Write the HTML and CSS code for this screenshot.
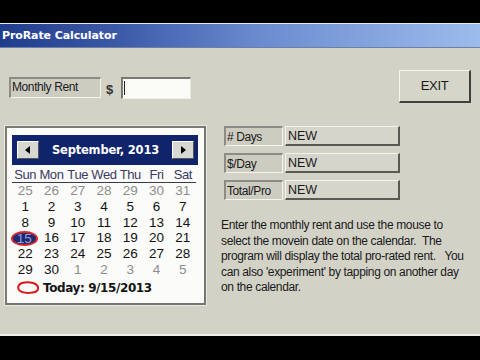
FILE: index.html
```html
<!DOCTYPE html>
<html>
<head>
<meta charset="utf-8">
<link rel="stylesheet" href="styles.css">
</head>
<body>
<div class="screen">
  <div class="black-top"></div>
  <div class="window">
    <div class="titlebar"><span class="title">ProRate Calculator</span></div>
    <div class="content">
      <div class="top-row">
        <div class="rent-group">
          <div class="label-box rent-label">Monthly Rent</div>
          <span class="dollar">$</span>
          <div class="input-box"><span class="caret"></span></div>
        </div>
        <div class="exit-btn">EXIT</div>
      </div>
      <div class="main-row">
        <div class="calendar">
          <div class="cal-head">
            <div class="nav-btn"><svg width="6" height="8" viewBox="0 0 6 8"><path d="M5 0 L0 4 L5 8 Z" fill="#000"/></svg></div>
            <div class="month">September, 2013</div>
            <div class="nav-btn"><svg width="6" height="8" viewBox="0 0 6 8"><path d="M1 0 L6 4 L1 8 Z" fill="#000"/></svg></div>
          </div>
          <div class="weekdays">
            <span>Sun</span><span>Mon</span><span>Tue</span><span>Wed</span><span>Thu</span><span>Fri</span><span>Sat</span>
          </div>
          <div class="days">
            <span class="dim">25</span><span class="dim">26</span><span class="dim">27</span><span class="dim">28</span><span class="dim">29</span><span class="dim">30</span><span class="dim">31</span>
            <span>1</span><span>2</span><span>3</span><span>4</span><span>5</span><span>6</span><span>7</span>
            <span>8</span><span>9</span><span>10</span><span>11</span><span>12</span><span>13</span><span>14</span>
            <span class="sel"><i>15</i></span><span>16</span><span>17</span><span>18</span><span>19</span><span>20</span><span>21</span>
            <span>22</span><span>23</span><span>24</span><span>25</span><span>26</span><span>27</span><span>28</span>
            <span>29</span><span>30</span><span class="dim">1</span><span class="dim">2</span><span class="dim">3</span><span class="dim">4</span><span class="dim">5</span>
          </div>
          <div class="today">
            <svg width="24" height="14" viewBox="0 0 24 14"><path d="M6 2 C13 0 23 2 22 8 C21 13 6 13 3 9 C1 6 3 3 6 2 Z" fill="none" stroke="#d81818" stroke-width="2"/></svg>
            <span>Today: 9/15/2013</span>
          </div>
        </div>
        <div class="right-col">
          <div class="field-row"><div class="label-box field-label">#&nbsp;Days</div><div class="value-box">NEW</div></div>
          <div class="field-row"><div class="label-box field-label">$/Day</div><div class="value-box">NEW</div></div>
          <div class="field-row"><div class="label-box field-label">Total/Pro</div><div class="value-box">NEW</div></div>
          <p class="help">Enter the monthly rent and use the mouse to select the movein date on the calendar.&nbsp; The program will display the total pro-rated rent.&nbsp;&nbsp; You can also 'experiment' by tapping on another day on the calendar.</p>
        </div>
      </div>
    </div>
  </div>
  <div class="black-bottom"></div>
</div>
</body>
</html>
```

FILE: styles.css
```css
* { box-sizing: border-box; }
html, body { margin: 0; padding: 0; background: #000; }
body {
  width: 480px;
  height: 360px;
  overflow: hidden;
  font-family: "Liberation Sans", Arial, sans-serif;
  color: #141414;
}
.screen { display: flex; flex-direction: column; height: 360px; }
.black-top { height: 23px; background: #000; }
.black-bottom { flex: 1; background: #000; }
.window {
  height: 313px;
  background: #d3d2c7;
  border-top: 1px solid #e8e8e2;
  border-bottom: 2px solid #efefe8;
  display: flex;
  flex-direction: column;
}
.titlebar {
  height: 24px;
  background: linear-gradient(90deg, #203c8c 0%, #3d5aa8 25%, #6d8cd0 55%, #9cbcec 100%);
  border-bottom: 1px solid #6c7fa8;
  display: flex;
  align-items: center;
  padding-left: 2px;
}
.title {
  color: #fff;
  font-family: "DejaVu Sans", sans-serif;
  font-weight: bold;
  font-size: 11px;
  letter-spacing: -0.1px;
}
.content { flex: 1; padding: 22px 9px 0 5px; }
.top-row { display: flex; justify-content: space-between; align-items: center; height: 32px; }
.rent-group { display: flex; align-items: center; padding-left: 4px; }
.label-box {
  background: #cdccc1;
  border-top: 2px solid #8c8b84;
  border-left: 2px solid #8c8b84;
  border-bottom: 1px solid #f4f4ee;
  border-right: 1px solid #f4f4ee;
  font-size: 12px;
  letter-spacing: -0.4px;
  line-height: 16px;
  padding-left: 1px;
  color: #1a1a1a;
}
.rent-label { width: 92px; height: 21px; margin-top: 2px; }
.dollar { font-size: 13px; font-weight: bold; margin: 6px 0 0 5px; width: 15px; color: #333; }
.input-box {
  width: 70px; height: 22px;
  background: #fbfbf8;
  border-top: 2px solid #7a7a74;
  border-left: 2px solid #7a7a74;
  border-bottom: 1px solid #f0f0ea;
  border-right: 1px solid #e8e8e2;
  margin-top: 4px;
  padding: 2px 0 0 1px;
}
.caret { display: block; width: 1px; height: 14px; background: #222; }
.exit-btn {
  width: 72px; height: 33px;
  border-top: 1px solid #f6f6f0;
  border-left: 1px solid #f6f6f0;
  border-right: 2px solid #404040;
  border-bottom: 2px solid #404040;
  background: #d6d5ca;
  display: flex; align-items: center; justify-content: center;
  font-size: 13px;
  letter-spacing: -0.3px;
  color: #1a1a1a;
}
.main-row { display: flex; margin-top: 24px; }
.calendar {
  width: 202px; height: 179px;
  background: #fbfbf9;
  border-top: 2px solid #7c7c76;
  border-left: 2px solid #7c7c76;
  border-right: 2px solid #76766f;
  border-bottom: 2px solid #76766f;
  box-shadow: 0 0 0 1px #e9e9e2;
  padding: 7px 6px 0 5px;
}
.cal-head {
  height: 30px;
  background: #10246c;
  display: flex; align-items: center; justify-content: space-between;
  padding: 0 4px 0 5px;
}
.nav-btn {
  width: 22px; height: 18px;
  background: #d8d8d2;
  border-top: 1px solid #fff; border-left: 1px solid #fff;
  border-right: 1px solid #555; border-bottom: 1px solid #555;
  display: flex; align-items: center; justify-content: center;
}
.month {
  color: #fff;
  font-family: "DejaVu Sans", sans-serif;
  font-weight: bold;
  font-size: 11.5px;
  letter-spacing: -0.2px;
}
.weekdays {
  display: grid; grid-template-columns: repeat(7, 1fr);
  height: 18px;
  border-bottom: 1px solid #3a3a50;
  margin: 0 2px 0 0;
  font-size: 13px;
  color: #3a3a64;
  text-align: center;
  line-height: 20px;
  letter-spacing: -0.4px;
}
.days {
  display: grid; grid-template-columns: repeat(7, 1fr);
  grid-auto-rows: 15.8px;
  font-size: 13.5px;
  text-align: center;
  line-height: 15.8px;
  color: #121212;
  padding-right: 2px;
}
.days .dim { color: #8c8c8c; }
.sel { display: flex; justify-content: center; align-items: center; }
.sel i {
  font-style: normal;
  background: #1c2a7a;
  color: #9aa0c8;
  border: 2px solid #d42a2a;
  border-radius: 50%;
  width: 27px; height: 15px;
  line-height: 11px;
  margin-left: -2px;
  display: block;
}
.today {
  display: flex; align-items: center;
  margin-top: 3px; padding-left: 4px;
  font-family: "DejaVu Sans", sans-serif;
  font-weight: bold;
  font-size: 12px;
  letter-spacing: -0.4px;
}
.today svg { margin-right: 3px; }
.right-col { margin-left: 18px; flex: 1; }
.field-row { display: flex; height: 20px; margin-bottom: 7px; }
.field-label { width: 59px; height: 20px; padding-top: 1px; }
.value-box {
  width: 115px; height: 20px; margin-left: 2px;
  background: #d6d5cb;
  border-top: 1px solid #f4f4ee;
  border-left: 1px solid #f4f4ee;
  border-right: 2px solid #5a5a55;
  border-bottom: 2px solid #5a5a55;
  font-size: 12.5px;
  padding: 2px 0 0 2px;
  line-height: 15px;
  color: #1a1a1a;
}
.help {
  margin: 18px 0 0 -3px;
  width: 250px;
  font-size: 12px;
  line-height: 15.5px;
  letter-spacing: -0.35px;
  color: #1a1a1a;
}
```
